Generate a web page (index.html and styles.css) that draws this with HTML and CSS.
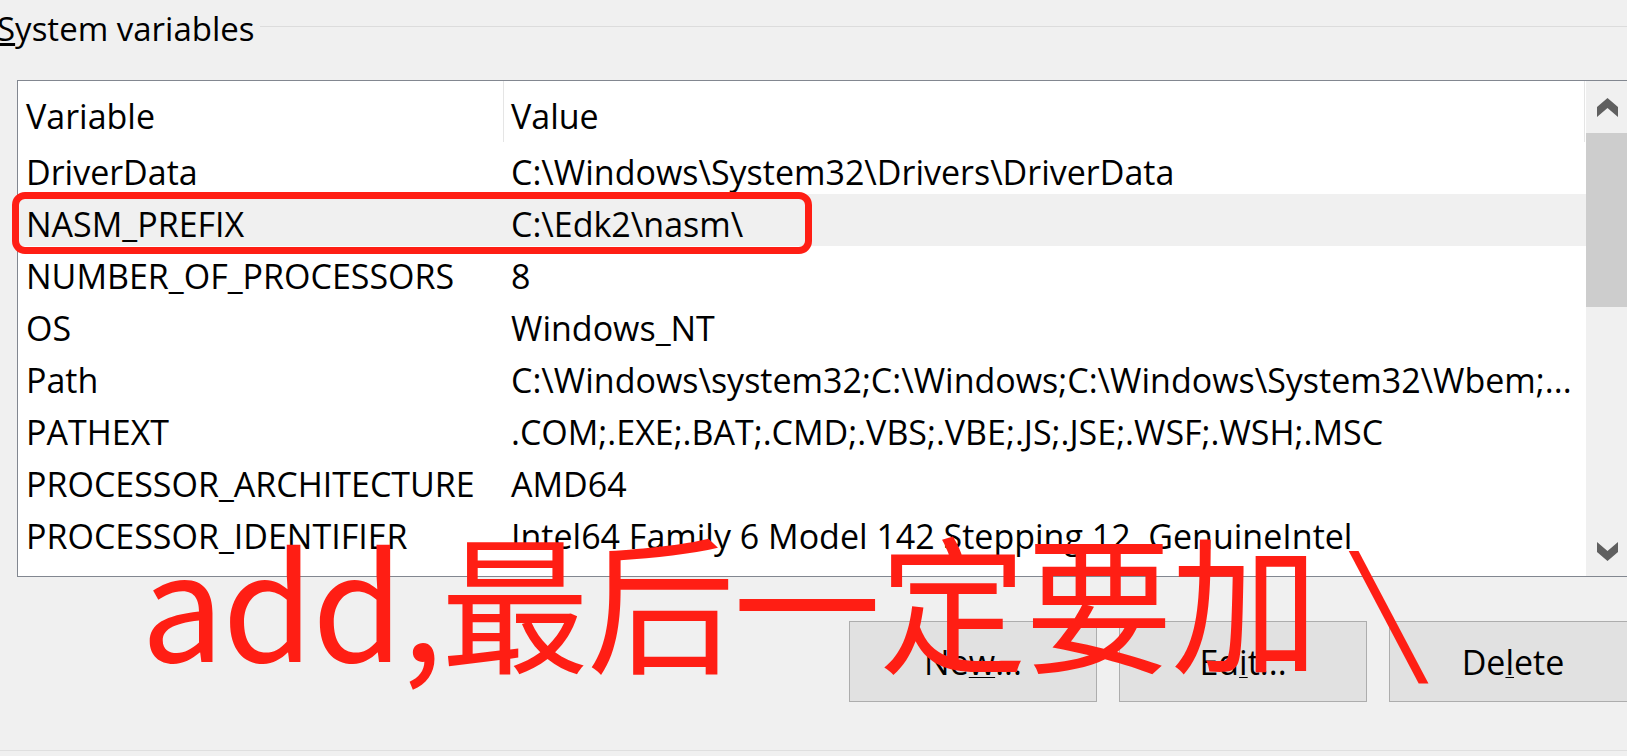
FILE: index.html
```html
<!DOCTYPE html>
<html lang="en">
<head>
    <meta charset="UTF-8">
    <title>System variables</title>
    <link rel="stylesheet" href="styles.css">
</head>
<body>
    <div class="group-title">
        <span><u>S</u>ystem variables</span>
        <div class="line"></div>
    </div>

    <div class="list">
        <div class="table">
            <div class="row header">
                <div class="col-name">Variable</div>
                <div class="col-value">Value</div>
            </div>
            <div class="row">
                <div class="col-name">DriverData</div>
                <div class="col-value">C:\Windows\System32\Drivers\DriverData</div>
            </div>
            <div class="row selected">
                <div class="col-name">NASM_PREFIX</div>
                <div class="col-value">C:\Edk2\nasm\</div>
            </div>
            <div class="row">
                <div class="col-name">NUMBER_OF_PROCESSORS</div>
                <div class="col-value">8</div>
            </div>
            <div class="row">
                <div class="col-name">OS</div>
                <div class="col-value">Windows_NT</div>
            </div>
            <div class="row">
                <div class="col-name">Path</div>
                <div class="col-value">C:\Windows\system32;C:\Windows;C:\Windows\System32\Wbem;...</div>
            </div>
            <div class="row">
                <div class="col-name">PATHEXT</div>
                <div class="col-value">.COM;.EXE;.BAT;.CMD;.VBS;.VBE;.JS;.JSE;.WSF;.WSH;.MSC</div>
            </div>
            <div class="row">
                <div class="col-name">PROCESSOR_ARCHITECTURE</div>
                <div class="col-value">AMD64</div>
            </div>
            <div class="row">
                <div class="col-name">PROCESSOR_IDENTIFIER</div>
                <div class="col-value">Intel64 Family 6 Model 142 Stepping 12, GenuineIntel</div>
            </div>
            <div class="row">
                <div class="col-name">PROCESSOR_LEVEL</div>
                <div class="col-value">6</div>
            </div>
        </div>
        <div class="scrollbar">
            <div class="sb-btn up">
                <svg width="21" height="19" viewBox="0 0 21 19"><polygon points="0,9 10.5,0 21,9 21,19 10.5,10 0,19" fill="#606060"/></svg>
            </div>
            <div class="sb-thumb"></div>
            <div class="sb-track"></div>
            <div class="sb-btn down">
                <svg width="21" height="19" viewBox="0 0 21 19"><polygon points="0,0 10.5,9 21,0 21,10 10.5,19 0,10" fill="#606060"/></svg>
            </div>
        </div>
    </div>

    <div class="buttons">
        <button>Ne<u>w</u>...</button>
        <button>Ed<u>i</u>t...</button>
        <button>De<u>l</u>ete</button>
    </div>

    <div class="footer"></div>

    <!-- red annotation drawn over the dialog -->
    <div class="mark"></div>
    <div class="note">add,最后一定要加 <span class="slash">\</span></div>
</body>
</html>
```

FILE: styles.css
```css
body {
    margin: 0;
    width: 1627px;
    height: 756px;
    overflow: hidden;
    position: relative;
    background-color: #f0f0f0;
    font-family: "Open Sans", Arial, sans-serif;
    font-size: 34px;
    color: #000;
}

.group-title {
    display: flex;
    align-items: center;
    height: 52px;
}

.group-title span {
    font-size: 33px;
    margin-left: -3px;
    padding-top: 4px;
    padding-right: 5px;
    white-space: nowrap;
}

.group-title .line {
    flex: 1;
    border-top: 1px solid #dcdcdc;
}

.list {
    display: flex;
    margin: 28px 0 0 17px;
    height: 497px;
    box-sizing: border-box;
    border: 1px solid #828790;
    border-right: none;
    background: white;
}

.table {
    flex: 1;
    overflow: hidden;
}

.row {
    display: flex;
    height: 52px;
    box-sizing: border-box;
    padding-top: 8px;
    line-height: 44px;
    white-space: nowrap;
}

.row.header {
    height: 61px;
    padding-top: 0;
    line-height: 70px;
}

.row.selected {
    background-color: #f0f0f0;
}

.col-name {
    width: 486px;
    flex-shrink: 0;
    padding-left: 8px;
    box-sizing: border-box;
}

.col-value {
    flex: 1;
    padding-left: 7px;
    overflow: hidden;
}

.header .col-name {
    border-right: 1px solid #e5e5e5;
}

.header .col-value {
    border-right: 1px solid #e5e5e5;
    margin-right: 1px;
}

.scrollbar {
    width: 41px;
    display: flex;
    flex-direction: column;
    background-color: #f0f0f0;
}

.sb-btn {
    display: flex;
    justify-content: center;
    align-items: center;
}

.sb-btn.up {
    height: 52px;
    padding-left: 2px;
}

.sb-btn.down {
    height: 50px;
    padding-left: 2px;
}

.sb-thumb {
    height: 174px;
    background-color: #cdcdcd;
}

.sb-track {
    flex: 1;
}

.buttons {
    display: flex;
    gap: 22px;
    margin-top: 44px;
    padding-left: 849px;
    height: 81px;
}

.buttons button {
    flex-shrink: 0;
    width: 248px;
    height: 81px;
    background-color: #e1e1e1;
    border: 1px solid #adadad;
    font-family: inherit;
    font-size: 34px;
    color: #000;
    padding: 0;
}

.buttons u {
    text-underline-offset: 2px;
    text-decoration-thickness: 1px;
}

.footer {
    margin-top: 48px;
    border-top: 1px solid #dfdfdf;
}

.mark {
    position: absolute;
    left: 12px;
    top: 192px;
    width: 800px;
    height: 62px;
    box-sizing: border-box;
    border: 7px solid #ff1e14;
    border-radius: 13px;
}

.note {
    position: absolute;
    left: 141px;
    top: 524px;
    font-family: "Noto Sans CJK SC", sans-serif;
    font-size: 148px;
    letter-spacing: -2px;
    line-height: 1;
    color: #ff1e14;
    white-space: nowrap;
}

.note .slash {
    display: inline-block;
    transform: translate(8px, 2px) skewX(11deg) scaleY(0.92);
}
```
